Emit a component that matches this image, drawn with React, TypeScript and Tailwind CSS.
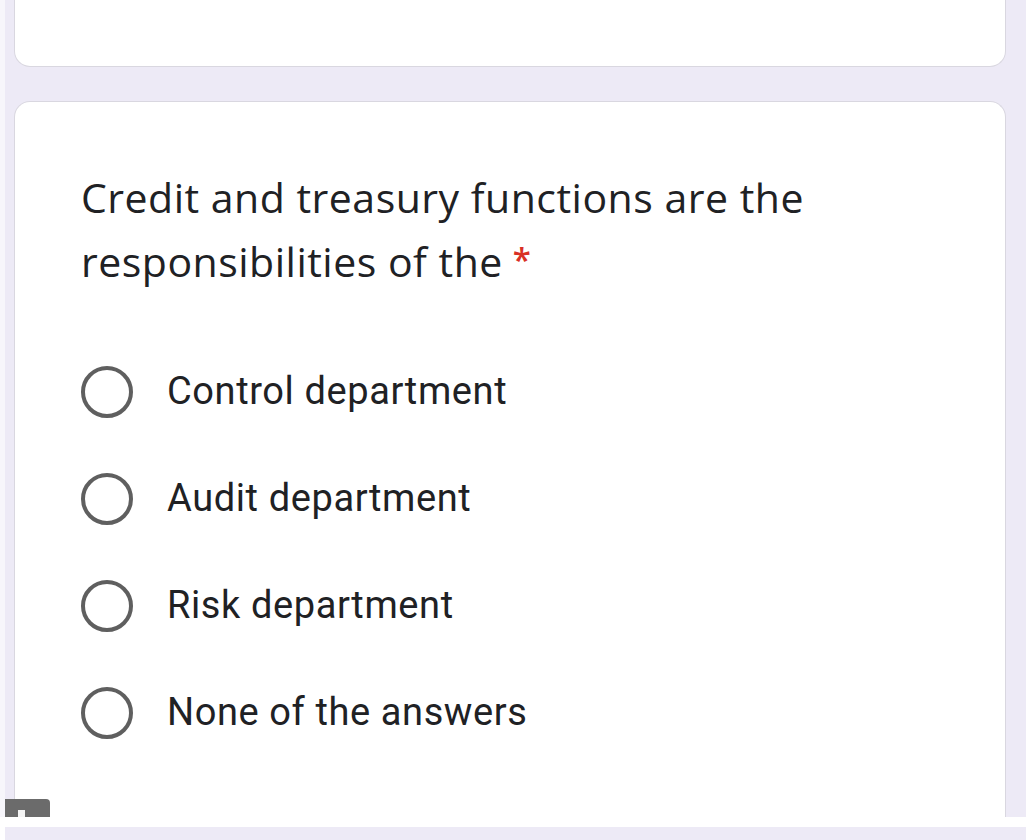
import React from "react";

const options = ["Control department", "Audit department", "Risk department", "None of the answers"];

export default function App() {
  return (
    <div className="relative w-[1026px] h-[840px] overflow-hidden bg-[#edeaf6] flex flex-col">
      <div className="flex flex-1 min-h-0">
        <div className="w-[5px] bg-[#f7f6fb]" />
        <div className="flex-1 flex flex-col pl-[9px] pr-[20px]">
          <div className="h-[67px] bg-white rounded-b-[16px] border-x border-b border-[#d9d7e0]" />
          <div className="mt-[34px] flex-1 bg-white rounded-t-[16px] border-x border-t border-[#d9d7e0] pl-[66px] pt-[63px]">
            <div
              className="text-[41px] leading-[64px] tracking-[0.5px] text-[#202124]"
              style={{ fontFamily: '"Open Sans", sans-serif' }}
            >
              <div>Credit and treasury functions are the</div>
              <div>
                responsibilities of the
                <span className="relative top-[-5px] ml-[10px] text-[#d93025] text-[33px] font-semibold">*</span>
              </div>
            </div>
            <div className="mt-[41px] flex flex-col">
              {options.map((o) => (
                <div key={o} className="h-[107px] flex items-center">
                  <div className="w-[52px] h-[52px] rounded-full border-[4px] border-[#5f5f5f] mr-[34px]" />
                  <span
                    className="text-[38px] tracking-[0.6px] text-[#202124]"
                    style={{ fontFamily: "Roboto, sans-serif" }}
                  >
                    {o}
                  </span>
                </div>
              ))}
            </div>
          </div>
        </div>
      </div>
      <div className="h-[10px] bg-white" />
      <div className="h-[13px] bg-[#edeaf6] border-l-[5px] border-white" />
      <div className="absolute left-[5px] top-[799px] w-[45px] h-[18px] bg-[#6b6b6b] rounded-tr-[4px]">
        <div className="absolute left-[13px] top-[11px] w-[7px] h-[7px] bg-[#f4f4f4]" />
      </div>
    </div>
  );
}
